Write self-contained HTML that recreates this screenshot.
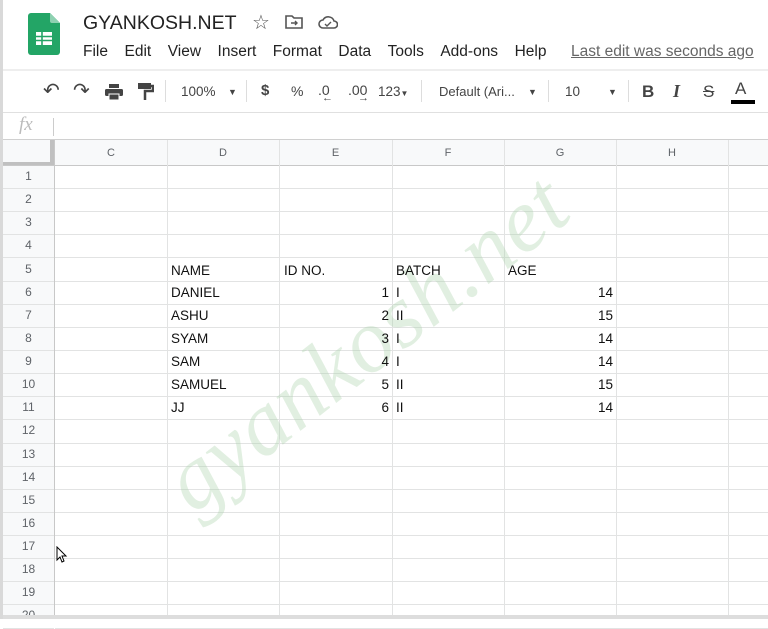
<!DOCTYPE html>
<html><head><meta charset="utf-8"><style>
*{margin:0;padding:0;box-sizing:border-box}
body{width:768px;height:619px;overflow:hidden;background:#fff;font-family:"Liberation Sans",Arial,sans-serif;position:relative}
.a{position:absolute}
.menu span{margin-right:16.5px}
.hl{position:absolute;left:55px;width:713px;height:1px;background:#e2e3e3}
.vl{position:absolute;top:140px;width:1px;height:479px;background:#e2e3e3}
.rn{position:absolute;left:3px;width:51px;text-align:center;font-size:12px;color:#5f6368}
.ch{position:absolute;top:140px;height:26px;line-height:26px;text-align:center;font-size:11px;color:#5f6368}
.c{position:absolute;font-size:13.5px;color:#111;height:23px;line-height:23px}
.r{text-align:right}
.tb{position:absolute;top:82px;font-size:14px;color:#444}
</style></head><body>
<div class="a" style="left:0;top:0;width:3px;height:619px;background:#d9d9d9"></div>
<svg class="a" style="left:28px;top:13px" width="32" height="42" viewBox="0 0 32 42">
<path d="M3 0h19l10 10v29a3 3 0 0 1-3 3H3a3 3 0 0 1-3-3V3a3 3 0 0 1 3-3z" fill="#23a566"/>
<path d="M22 0l10 10h-8a2 2 0 0 1-2-2z" fill="#8ed1b1"/>
<rect x="8" y="19" width="16" height="13" fill="#fff"/>
<path d="M8 23.5h16M8 27.5h16M14 19v13" stroke="#23a566" stroke-width="1.6"/>
</svg>
<div class="a" style="left:83px;top:12px;font-size:19.5px;color:#222">GYANKOSH.NET</div>
<div class="a" style="left:252px;top:10px;font-size:20px;color:#555">☆</div>
<svg class="a" style="left:285px;top:15px" width="18" height="14" viewBox="0 0 18 14"><path d="M1 1h6l2 2h8v10H1z" fill="none" stroke="#555" stroke-width="1.6"/><path d="M6 8h6M10 6l2 2-2 2" stroke="#555" stroke-width="1.4" fill="none"/></svg>
<svg class="a" style="left:318px;top:15px" width="20" height="14" viewBox="0 0 20 14"><path d="M5 13a4 4 0 0 1 0-8 6 6 0 0 1 11 1 3.5 3.5 0 0 1 0 7z" fill="none" stroke="#555" stroke-width="1.6"/><path d="M7 9l2 2 4-4" stroke="#555" stroke-width="1.4" fill="none"/></svg>
<div class="a menu" style="left:83px;top:43px;font-size:15.5px;color:#222;white-space:nowrap"><span>File</span><span>Edit</span><span>View</span><span>Insert</span><span>Format</span><span>Data</span><span>Tools</span><span>Add-ons</span><span>Help</span></div>
<div class="a" style="left:571px;top:43px;font-size:15.5px;color:#666;text-decoration:underline">Last edit was seconds ago</div>
<div class="a" style="left:3px;top:69px;width:765px;height:2px;background:#eee"></div>
<div class="tb" style="left:43px;font-size:20px;top:78px">↶</div>
<div class="tb" style="left:73px;font-size:20px;top:78px">↷</div>
<svg class="a" style="left:105px;top:84px" width="18" height="16" viewBox="0 0 18 16"><rect x="4" y="0" width="10" height="4" fill="#444"/><rect x="0" y="5" width="18" height="7" rx="1.5" fill="#444"/><rect x="4" y="10" width="10" height="6" fill="#444" stroke="#fff" stroke-width="1"/></svg>
<svg class="a" style="left:138px;top:83px" width="16" height="18" viewBox="0 0 16 18"><rect x="0" y="0" width="13" height="6" fill="#444"/><path d="M13 3h2v5H7v9" stroke="#444" stroke-width="2.5" fill="none"/></svg>
<div class="a" style="left:165px;top:80px;width:1px;height:22px;background:#ddd"></div>
<div class="tb" style="left:181px;font-size:13.5px;top:84px">100%</div>
<div class="tb" style="left:228px;font-size:9px;top:87px">▼</div>
<div class="a" style="left:246px;top:80px;width:1px;height:22px;background:#ddd"></div>
<div class="tb" style="left:261px;font-size:15px;top:82px;font-weight:bold">$</div>
<div class="tb" style="left:291px;font-size:14px;top:83px">%</div>
<div class="tb" style="left:318px;font-size:14px;top:82px">.0<span style="position:absolute;left:4px;top:10px;font-size:11px">←</span></div>
<div class="tb" style="left:348px;font-size:14px;top:82px">.00<span style="position:absolute;left:10px;top:10px;font-size:11px">→</span></div>
<div class="tb" style="left:378px;font-size:13.5px;top:84px">123<span style="font-size:8px">▼</span></div>
<div class="a" style="left:421px;top:80px;width:1px;height:22px;background:#ddd"></div>
<div class="tb" style="left:439px;font-size:13px;top:84px">Default (Ari...</div>
<div class="tb" style="left:528px;font-size:9px;top:87px">▼</div>
<div class="a" style="left:548px;top:80px;width:1px;height:22px;background:#ddd"></div>
<div class="tb" style="left:565px;font-size:13.5px;top:84px">10</div>
<div class="tb" style="left:608px;font-size:9px;top:87px">▼</div>
<div class="a" style="left:628px;top:80px;width:1px;height:22px;background:#ddd"></div>
<div class="tb" style="left:642px;font-size:17px;top:82px;font-weight:bold">B</div>
<div class="tb" style="left:673px;font-size:18px;top:81px;font-style:italic;font-family:'Liberation Serif',serif;font-weight:bold">I</div>
<div class="tb" style="left:703px;font-size:17px;top:82px;text-decoration:line-through">S</div>
<div class="tb" style="left:735px;font-size:17px;top:79px">A</div>
<div class="a" style="left:731px;top:100px;width:24px;height:4px;background:#000"></div>
<div class="a" style="left:3px;top:112px;width:765px;height:1px;background:#e0e0e0"></div>
<div class="a" style="left:19px;top:114px;font-size:19px;font-style:italic;color:#bbb;font-family:'Liberation Serif',serif">fx</div>
<div class="a" style="left:53px;top:118px;width:1px;height:18px;background:#ccc"></div>
<div class="a" style="left:3px;top:139px;width:765px;height:1px;background:#d0d0d0"></div>
<div class="a" style="left:3px;top:140px;width:765px;height:26px;background:#f8f9fa"></div>
<div class="a" style="left:3px;top:166px;width:51px;height:453px;background:#f8f9fa"></div>
<div class="a" style="left:3px;top:140px;width:51px;height:26px;border-right:4px solid #c0c0c0;border-bottom:4px solid #c0c0c0"></div>
<div class="a" style="left:3px;top:165px;width:765px;height:1px;background:#c8c8c8"></div>
<div class="a" style="left:54px;top:140px;width:1px;height:479px;background:#c8c8c8"></div>
<div class="ch" style="left:55px;width:112px">C</div>
<div class="ch" style="left:167px;width:112px">D</div>
<div class="ch" style="left:279px;width:113px">E</div>
<div class="ch" style="left:392px;width:112px">F</div>
<div class="ch" style="left:504px;width:112px">G</div>
<div class="ch" style="left:616px;width:112px">H</div>
<div class="vl" style="left:167px"></div><div class="vl" style="left:279px"></div><div class="vl" style="left:392px"></div><div class="vl" style="left:504px"></div><div class="vl" style="left:616px"></div><div class="vl" style="left:728px"></div>
<div id="rows"></div>
<div class="a" style="left:175px;top:440px;font-size:90px;font-style:italic;font-family:'Liberation Serif',serif;color:rgba(170,210,170,0.35);transform:rotate(-38deg);transform-origin:left center;white-space:nowrap;letter-spacing:1px">gyankosh.net</div>
<div class="c" style="left:171px;top:259px">NAME</div>
<div class="c" style="left:284px;top:259px">ID NO.</div>
<div class="c" style="left:396px;top:259px">BATCH</div>
<div class="c" style="left:508px;top:259px">AGE</div>
<div id="data"></div>
<svg class="a" style="left:56px;top:546px" width="12" height="18" viewBox="0 0 12 18"><path d="M1 1v13l3-3 2 5 2-1-2-5h4z" fill="#fff" stroke="#000" stroke-width="1"/></svg>
<div class="a" style="left:3px;top:615px;width:765px;height:4px;background:#ddd"></div>
<script>
var h='',d='';
for(var i=1;i<=20;i++){var t=165+23.13*(i-1);
h+='<div class="rn" style="top:'+t+'px;height:23px;line-height:23px">'+i+'</div>';
h+='<div class="hl" style="top:'+(t+23.1)+'px"></div>';
h+='<div class="a" style="left:3px;width:51px;height:1px;background:#e2e3e3;top:'+(t+23.1)+'px"></div>';}
document.getElementById('rows').innerHTML=h;
var D=[['DANIEL',1,'I',14],['ASHU',2,'II',15],['SYAM',3,'I',14],['SAM',4,'I',14],['SAMUEL',5,'II',15],['JJ',6,'II',14]];
for(var j=0;j<6;j++){var t=165+23.13*(5+j);
d+='<div class="c" style="left:171px;top:'+t+'px">'+D[j][0]+'</div>';
d+='<div class="c r" style="left:279px;width:110px;top:'+t+'px">'+D[j][1]+'</div>';
d+='<div class="c" style="left:396px;top:'+t+'px">'+D[j][2]+'</div>';
d+='<div class="c r" style="left:504px;width:109px;top:'+t+'px">'+D[j][3]+'</div>';}
document.getElementById('data').innerHTML=d;
</script>
</body></html>
